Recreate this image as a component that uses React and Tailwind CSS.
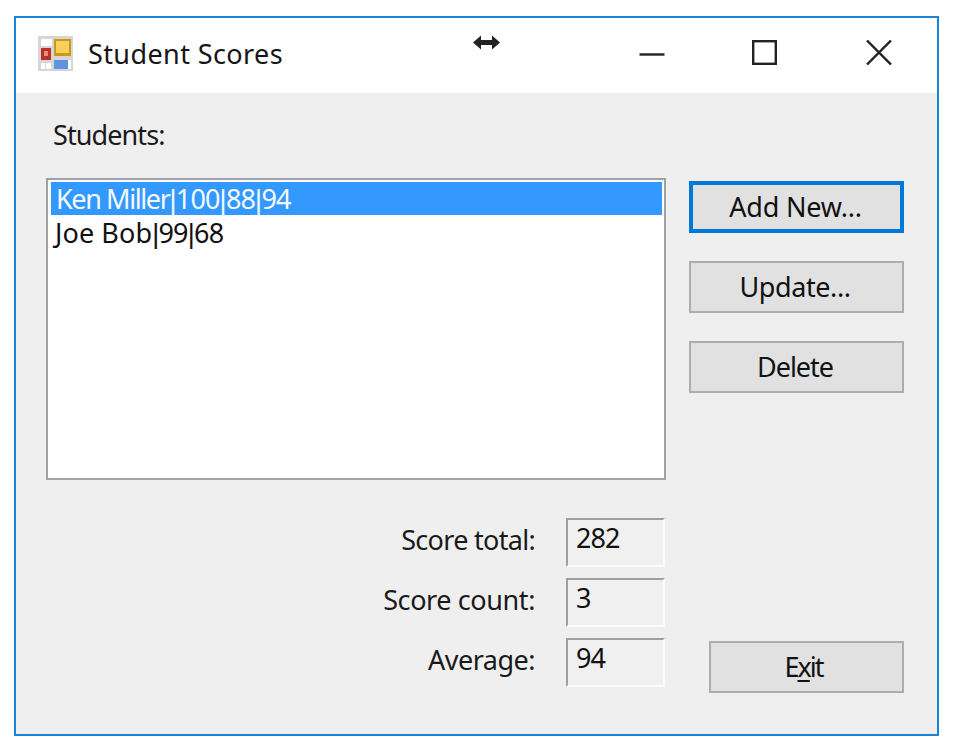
const font = { fontFamily: '"Noto Sans", "Open Sans", sans-serif' };

function WinButton({ children, className = "" }) {
  return (
    <button
      className={`flex h-[52px] items-center justify-center bg-[#e1e1e1] text-[27px] text-[#111] ${className}`}
    >
      {children}
    </button>
  );
}

function ScoreRow({ label, value, tracking }) {
  return (
    <div className="flex h-[49px] items-start justify-end pr-[1px]">
      <span className={`mt-[3px] text-[27px] leading-[38px] text-[#1a1a1a] ${tracking}`}>{label}</span>
      <div className="ml-[31px] h-[49px] w-[99px] border-2 border-t-[#a0a0a0] border-l-[#a0a0a0] border-r-[#fbfbfb] border-b-[#fbfbfb] bg-[#f0f0f0] pl-[8px] text-[27px] leading-[36px] tracking-[-0.9px] text-[#111]">
        {value}
      </div>
    </div>
  );
}

function Pipe() {
  return <span className="font-['Liberation_Sans'] tracking-[-0.6px]">|</span>;
}

export default function App() {
  return (
    <div className="h-[748px] w-[953px] bg-white pl-[14px] pt-[16px]" style={font}>
      <div className="relative flex h-[720px] w-[925px] flex-col border-2 border-[#1b84d6] bg-[#efefef]">
        <div className="flex h-[75px] shrink-0 items-center bg-white pl-[22px]">
          <svg width="36" height="36" viewBox="0 0 36 36" className="mb-[3px] shrink-0">
            <rect width="35" height="35" fill="#d6d6d6" />
            <rect x="3" y="3" width="11" height="7" fill="#fff" />
            <rect x="3" y="12" width="10" height="12" fill="#b8322a" />
            <rect x="6" y="15" width="4" height="5" fill="#e88b7c" />
            <rect x="3" y="27" width="4" height="6" fill="#fff" />
            <rect x="8" y="27" width="5" height="6" fill="#fff" />
            <rect x="16" y="3" width="17" height="17" fill="#c99a1a" />
            <rect x="18" y="5" width="13" height="12" fill="#f7cf5a" />
            <rect x="16" y="24" width="14" height="9" fill="#5f92df" />
            <rect x="30" y="24" width="3" height="9" fill="#fff" />
          </svg>
          <span className="mb-[2px] ml-[14px] text-[27px] tracking-[0.4px] text-[#151515]">Student Scores</span>
          <div className="mb-[6px] ml-auto flex items-center">
            <svg width="26" height="27" viewBox="0 0 26 27" className="mr-[87px]">
              <path d="M0.5 15.5H25.5" stroke="#222" strokeWidth="2.4" />
            </svg>
            <svg width="25" height="25" viewBox="0 0 25 25" className="mr-[89px]">
              <rect x="1.2" y="1.2" width="22.6" height="22.6" fill="none" stroke="#222" strokeWidth="2.4" />
            </svg>
            <svg width="26" height="25" viewBox="0 0 26 25" className="mr-[45px]">
              <path d="M1 0.5L25 24.5M25 0.5L1 24.5" stroke="#222" strokeWidth="2.4" />
            </svg>
          </div>
        </div>

        <svg width="27" height="15" viewBox="0 0 27 15" className="absolute left-[457px] top-[17px]">
          <path d="M0 7.5L8 0.5V5H19V0.5L27 7.5L19 14.5V10H8V14.5Z" fill="#222" />
        </svg>

        <div className="flex flex-1">
          <div className="ml-[30px] w-[620px]">
            <div className="ml-[7px] mt-[24px] text-[27px] leading-[36px] tracking-[-0.9px] text-[#1a1a1a]">Students:</div>
            <div className="mt-[25px] h-[302px] border-2 border-[#9fa2a8] bg-white pl-[3px] pr-[2px] pt-[2px]">
              <div className="h-[33px] bg-[#3399ff] pl-[5px] text-[27px] leading-[33px] tracking-[-0.9px] text-[#f4f9ff]">
                <span className="tracking-[-1.4px]">Ken Miller</span><Pipe />100<Pipe />88<Pipe />94
              </div>
              <div className="pl-[4px] text-[27px] leading-[35px] tracking-[-0.9px] text-[#111]">
                <span className="tracking-[0.1px]">Joe Bob</span><Pipe />99<Pipe />68
              </div>
            </div>
            <div className="mt-[38px] flex flex-col gap-[11px]">
              <ScoreRow label="Score total:" value="282" tracking="tracking-[-0.7px]" />
              <ScoreRow label="Score count:" value="3" tracking="tracking-[-0.4px]" />
              <ScoreRow label="Average:" value="94" tracking="tracking-[-0.5px]" />
            </div>
          </div>
          <div className="ml-[23px] flex w-[215px] flex-col pt-[88px]">
            <WinButton className="w-[215px] border-[4px] border-[#0078d7] pr-[2px] tracking-[-0.2px]">Add New...</WinButton>
            <WinButton className="mt-[28px] w-[215px] border-2 border-[#adadad] pr-[3px] tracking-[-0.4px]">Update...</WinButton>
            <WinButton className="mt-[28px] w-[215px] border-2 border-[#adadad] pr-[3px] tracking-[-1px]">Delete</WinButton>
            <WinButton className="ml-[20px] mt-[248px] w-[195px] border-2 border-[#adadad] pr-[6px] tracking-[-2px]">
              <span>E<span className="underline decoration-2 underline-offset-[3px]">x</span>it</span>
            </WinButton>
          </div>
        </div>
      </div>
    </div>
  );
}
